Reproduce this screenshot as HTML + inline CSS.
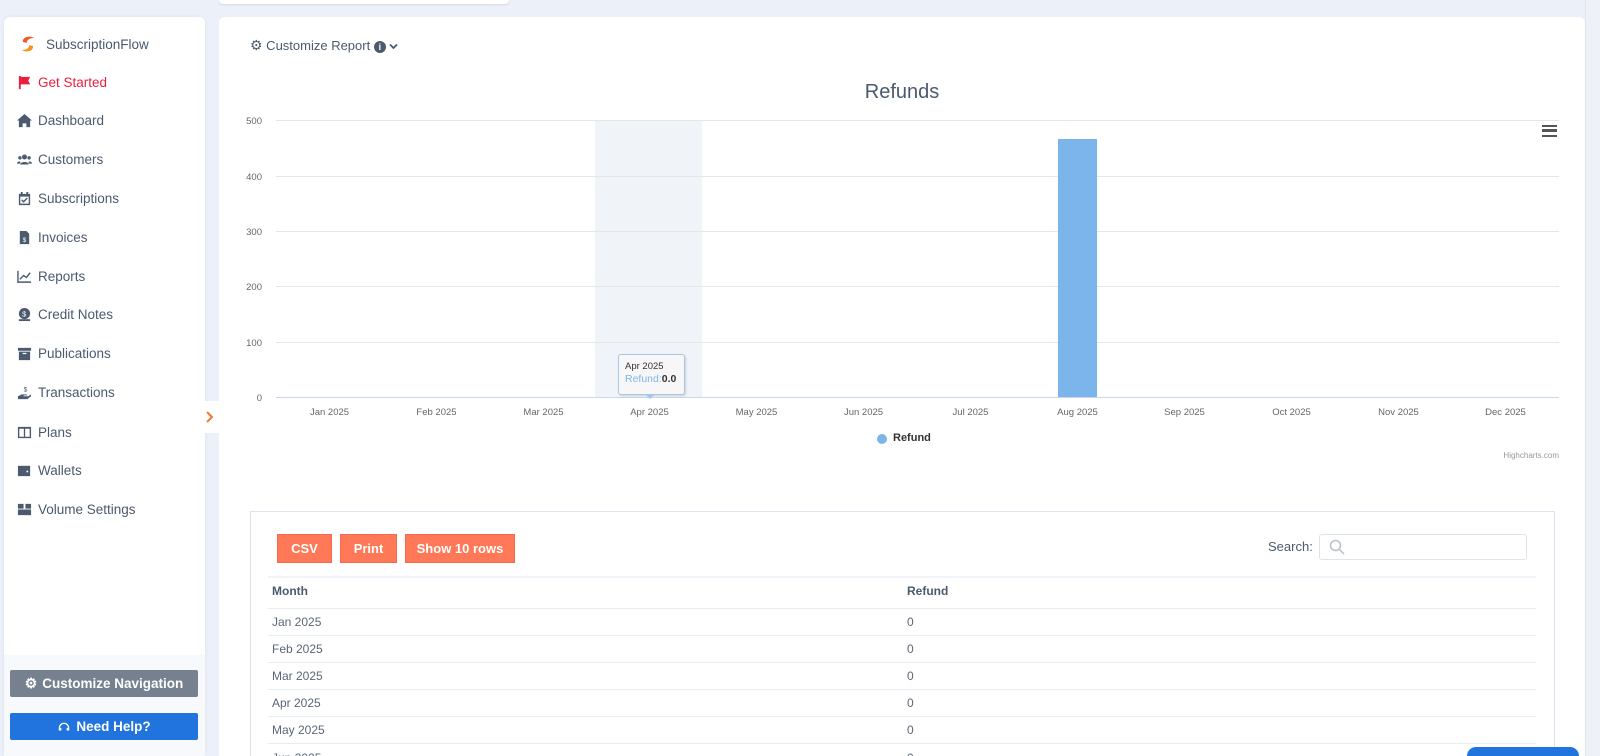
<!DOCTYPE html>
<html style="width:1600px;height:756px;overflow:hidden"><head><meta charset="utf-8">
<style>
*{box-sizing:border-box;margin:0;padding:0}
body{width:1600px;height:756px;overflow:hidden;background:#ecf0f8;font-family:"Liberation Sans",sans-serif;color:#4b5a6e}
#wrap{position:relative;width:1600px;height:756px;overflow:hidden}
.abs{position:absolute}
.side{left:4px;top:17px;width:201px;height:739px;background:#fff;border-radius:6px 6px 0 0;box-shadow:0 0 4px rgba(0,0,0,.06)}
.nav{position:absolute;left:17px;font-size:13.5px;color:#4b5a6e;display:flex;align-items:center;gap:6px}
.nav svg{width:15px;height:15px;fill:#4b5a6e}
.sbot{left:4px;top:655px;width:201px;height:101px;background:#f8f9fc}
.btn1{left:10px;top:670px;width:188px;height:27px;background:#76808f;color:#fff;font-size:13.5px;border-radius:2px;display:flex;align-items:center;justify-content:center;gap:5px;font-weight:bold}
.btn2{left:10px;top:713px;width:188px;height:27px;background:#2173de;color:#fff;font-size:13.5px;border-radius:2px;display:flex;align-items:center;justify-content:center;gap:5px;font-weight:bold}
.main{left:219px;top:17px;width:1366px;height:739px;background:#fff;border-radius:6px 6px 0 0}
.ylab{position:absolute;font-size:9.5px;color:#666;width:30px;text-align:right}
.grid{position:absolute;left:276px;width:1283px;height:1px;background:#e6e6e6}
.xlab{position:absolute;top:407px;font-size:9.5px;color:#666;width:107px;text-align:center}
.ob{position:absolute;top:534px;height:29px;background:#ff7858;color:#fff;font-size:13px;font-weight:bold;display:flex;align-items:center;justify-content:center;border:1px solid #f56a4a}
.row{position:absolute;left:268px;width:1268px;height:1px;background:#e8edf4}
.cell{position:absolute;font-size:12px;color:#5b6676}
</style></head><body><div id="wrap">
<div class="abs" style="left:219px;top:0;width:290px;height:4px;background:#fff;border-radius:0 0 12px 12px;box-shadow:0 1px 2px rgba(0,0,0,.1)"></div>
<div class="abs" style="left:1585px;top:0;width:15px;height:756px;background:#eef1f7;border-left:1px solid #e2e5ea"></div>

<div class="abs side"></div>
<div class="abs sbot"></div>
<div class="nav" style="top:36px;left:18px;font-size:13.5px">
<svg viewBox="0 0 20 16" style="width:20px;height:16px"><path d="M16 2C12 -1 4 1 5 6L9 7C8 4 12 2 16 2Z" fill="#f15a24"/><path d="M4 14C8 17 16 15 15 10L11 9C12 12 8 14 4 14Z" fill="#f7931e"/></svg>
<span style="margin-left:2px">SubscriptionFlow</span></div>
<div class="nav" style="top:75px;color:#e8203e"><svg viewBox="0 0 16 16"><path d="M2 1h2v14H2zM4 2h10l-2 4 2 4H4z" fill="#e8203e"/></svg>Get Started</div>
<div class="nav" style="top:113px"><svg viewBox="0 0 16 16"><path d="M8 1L0 8h2v7h4v-4h4v4h4V8h2z"/></svg>Dashboard</div>
<div class="nav" style="top:152px"><svg viewBox="0 0 18 16"><circle cx="9" cy="5" r="3"/><circle cx="3.5" cy="6" r="2"/><circle cx="14.5" cy="6" r="2"/><path d="M4 14c0-4 10-4 10 0zM0 13c0-3 4-3 4-2v2zM18 13c0-3-4-3-4-2v2z"/></svg>Customers</div>
<div class="nav" style="top:191px"><svg viewBox="0 0 16 16"><path d="M2 3h12v12H2zM3.5 6v7.5h9V6z M4 1h2v3H4zM10 1h2v3h-2z"/><path d="M5 9.5l2 2 4-4" stroke="#4b5a6e" stroke-width="1.5" fill="none"/></svg>Subscriptions</div>
<div class="nav" style="top:230px"><svg viewBox="0 0 16 16"><path d="M3 1h7l3 3v11H3z"/><text x="6" y="13" font-size="7" fill="#fff">$</text></svg>Invoices</div>
<div class="nav" style="top:269px"><svg viewBox="0 0 16 16"><path d="M1 2v12h14" stroke="#4b5a6e" stroke-width="1.5" fill="none"/><path d="M3 11l4-4 3 2 4-5" stroke="#4b5a6e" stroke-width="1.5" fill="none"/></svg>Reports</div>
<div class="nav" style="top:307px"><svg viewBox="0 0 16 16"><circle cx="8" cy="7" r="6"/><path d="M2 13h12v2H2z"/><text x="5.5" y="10" font-size="8" fill="#fff">$</text></svg>Credit Notes</div>
<div class="nav" style="top:346px"><svg viewBox="0 0 16 16"><path d="M1 2h14v3H1zM2 6h12v9H2z"/><path d="M6 8h4" stroke="#fff" stroke-width="1.3"/></svg>Publications</div>
<div class="nav" style="top:385px"><svg viewBox="0 0 16 16"><path d="M1 12l4-2h5l1 1H7v1h5l3-2v2l-4 3H1z"/><text x="7" y="7" font-size="7" fill="#4b5a6e">$</text></svg>Transactions</div>
<div class="nav" style="top:425px"><svg viewBox="0 0 16 16"><path d="M1 2h14v12H1zM2.5 4v8.5h4.8V4zM8.7 4v8.5h4.8V4z"/></svg>Plans</div>
<div class="nav" style="top:463px"><svg viewBox="0 0 16 16"><path d="M1 3h13v11H1z"/><circle cx="11" cy="9" r="1" fill="#fff"/></svg>Wallets</div>
<div class="nav" style="top:502px"><svg viewBox="0 0 16 16"><path d="M1 2h6v5H1zM9 2h6v5H9zM1 8h14v6H1z"/></svg>Volume Settings</div>
<div class="abs btn1"><span style="font-size:14px">⚙</span>Customize Navigation</div>
<div class="abs btn2"><svg viewBox="0 0 16 16" width="14" height="14"><path d="M2 9a6 6 0 0112 0v3h-3V9h1.5a4.5 4.5 0 00-9 0H5v3H2z" fill="#fff"/></svg>Need Help?</div>

<div class="abs" style="left:205px;top:401px;width:14px;height:32px;background:#fff"></div>
<svg class="abs" style="left:205px;top:410px" width="10" height="14" viewBox="0 0 10 14"><path d="M2 2l5 5-5 5" stroke="#f37a34" stroke-width="2" fill="none"/></svg>

<div class="abs main"></div>
<div class="abs" style="left:250px;top:37px;font-size:13px;color:#4b5a6e"><span style="font-size:14px">⚙</span> Customize Report <span style="display:inline-block;width:12px;height:12px;border-radius:50%;background:#4b5a6e;color:#fff;font-size:9px;text-align:center;line-height:12px;font-weight:bold">i</span> <svg width="9" height="7" viewBox="0 0 9 7"><path d="M1 1.5l3.5 3.5 3.5-3.5" stroke="#4b5a6e" stroke-width="1.8" fill="none"/></svg></div>
<div class="abs" style="left:802px;top:81px;width:200px;text-align:center;font-size:20px;color:#4b5a6e">Refunds</div>

<div class="abs" style="left:595px;top:120px;width:107px;height:278px;background:#f0f3f8"></div>
<div class="grid" style="top:120px"></div>
<div class="grid" style="top:176px"></div>
<div class="grid" style="top:231px"></div>
<div class="grid" style="top:286px"></div>
<div class="grid" style="top:342px"></div>
<div class="grid" style="top:397px;background:#ccd6eb"></div>
<div class="ylab" style="top:116px;left:232px">500</div>
<div class="ylab" style="top:172px;left:232px">400</div>
<div class="ylab" style="top:227px;left:232px">300</div>
<div class="ylab" style="top:282px;left:232px">200</div>
<div class="ylab" style="top:338px;left:232px">100</div>
<div class="ylab" style="top:393px;left:232px">0</div>
<div class="abs" style="left:1058px;top:139px;width:39px;height:258px;background:#7cb5ec"></div>
<div class="abs" style="left:1542px;top:125px;width:15px;height:12px;border-top:2.5px solid #555;border-bottom:2.5px solid #555"><div style="margin-top:2px;height:2.5px;background:#555"></div></div>

<div class="xlab" style="left:276px">Jan 2025</div>
<div class="xlab" style="left:383px">Feb 2025</div>
<div class="xlab" style="left:490px">Mar 2025</div>
<div class="xlab" style="left:596px">Apr 2025</div>
<div class="xlab" style="left:703px">May 2025</div>
<div class="xlab" style="left:810px">Jun 2025</div>
<div class="xlab" style="left:917px">Jul 2025</div>
<div class="xlab" style="left:1024px">Aug 2025</div>
<div class="xlab" style="left:1131px">Sep 2025</div>
<div class="xlab" style="left:1238px">Oct 2025</div>
<div class="xlab" style="left:1345px">Nov 2025</div>
<div class="xlab" style="left:1452px">Dec 2025</div>

<div class="abs" style="left:618px;top:354px;width:67px;height:41px;background:#f7f7f7;border:1px solid #a8c6e6;border-radius:3px;box-shadow:1px 1px 2px rgba(0,0,0,.15);padding:6px 0 0 6px;font-size:9.5px;color:#333;line-height:12px">Apr 2025<br><span style="color:#7cb5ec;font-size:10.5px">Refund:</span><b style="font-size:10.5px">0.0</b></div>
<div class="abs" style="left:645px;top:394px;width:0;height:0;border-left:5px solid transparent;border-right:5px solid transparent;border-top:5px solid #a8c6e6"></div>

<div class="abs" style="left:877px;top:434px;width:10px;height:10px;border-radius:50%;background:#7cb5ec"></div>
<div class="abs" style="left:893px;top:432px;font-size:11px;font-weight:bold;color:#333">Refund</div>
<div class="abs" style="left:1450px;top:451px;width:109px;text-align:right;font-size:8px;color:#999">Highcharts.com</div>

<div class="abs" style="left:250px;top:511px;width:1305px;height:245px;border:1px solid #dbe4ef;border-bottom:none"></div>
<div class="ob" style="left:277px;width:55px">CSV</div>
<div class="ob" style="left:340px;width:57px">Print</div>
<div class="ob" style="left:405px;width:110px">Show 10 rows</div>
<div class="abs" style="left:1268px;top:539px;font-size:13px;color:#4b5a6e">Search:</div>
<div class="abs" style="left:1319px;top:534px;width:208px;height:26px;border:1px solid #dfe3ea;border-radius:3px"><svg width="16" height="16" viewBox="0 0 16 16" style="position:absolute;left:9px;top:4px"><circle cx="6.5" cy="6.5" r="5" stroke="#b9c0cc" stroke-width="1.5" fill="none"/><path d="M10 10l5 5" stroke="#b9c0cc" stroke-width="1.5"/></svg></div>

<div class="row" style="top:576px;height:2px;background:#f2f4f9"></div>
<div class="cell" style="left:272px;top:584px;font-weight:bold;color:#4b5a6e">Month</div>
<div class="cell" style="left:907px;top:584px;font-weight:bold;color:#4b5a6e">Refund</div>
<div class="row" style="top:608px"></div>
<div class="cell" style="left:272px;top:615px">Jan 2025</div><div class="cell" style="left:907px;top:615px">0</div>
<div class="row" style="top:635px"></div>
<div class="cell" style="left:272px;top:642px">Feb 2025</div><div class="cell" style="left:907px;top:642px">0</div>
<div class="row" style="top:662px"></div>
<div class="cell" style="left:272px;top:669px">Mar 2025</div><div class="cell" style="left:907px;top:669px">0</div>
<div class="row" style="top:689px"></div>
<div class="cell" style="left:272px;top:696px">Apr 2025</div><div class="cell" style="left:907px;top:696px">0</div>
<div class="row" style="top:716px"></div>
<div class="cell" style="left:272px;top:723px">May 2025</div><div class="cell" style="left:907px;top:723px">0</div>
<div class="row" style="top:743px"></div>
<div class="abs" style="left:268px;top:744px;width:700px;height:12px;overflow:hidden"><div class="cell" style="left:4px;top:7px">Jun 2025</div><div class="cell" style="left:639px;top:7px">0</div></div>

<div class="abs" style="left:1467px;top:747px;width:112px;height:9px;border-radius:20px 20px 0 0;background:#2173de"></div>
</div></body></html>
